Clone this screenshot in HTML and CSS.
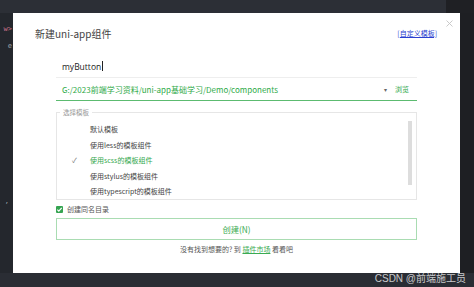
FILE: index.html
```html
<!DOCTYPE html>
<html lang="zh-CN">
<head>
    <meta charset="UTF-8">
    <title>新建uni-app组件</title>
    <link rel="stylesheet" href="styles.css">
</head>
<body>
    <div class="screen">
        <div class="topbar">
            <div class="topbar-main"></div>
            <div class="topbar-side"></div>
        </div>
        <div class="middle">
            <div class="gutter">
                <div class="code code-red">w&gt;</div>
                <div class="code code-gray">e</div>
                <div class="code code-dot">,</div>
            </div>
            <div class="dialog">
                <svg class="close" width="7" height="7" viewBox="0 0 7 7"><path d="M0.5 0.5 L6.5 6.5 M6.5 0.5 L0.5 6.5" stroke="#c4c4c4" stroke-width="0.9"/></svg>
                <div class="header">
                    <span class="title">新建uni-app组件</span>
                    <a class="custom-link">[自定义模板]</a>
                </div>
                <div class="form">
                    <div class="name-row">myButton<span class="caret"></span></div>
                    <div class="path-row">
                        <span class="path">G:/2023前端学习资料/uni-app基础学习/Demo/components</span>
                        <span class="arrow">&#9662;</span>
                        <span class="browse">浏览</span>
                    </div>
                    <fieldset class="templates">
                        <legend>选择模板</legend>
                        <div class="template-body">
                            <ul class="template-list">
                                <li>默认模板</li>
                                <li>使用less的模板组件</li>
                                <li class="active">使用scss的模板组件</li>
                                <li>使用stylus的模板组件</li>
                                <li>使用typescript的模板组件</li>
                            </ul>
                            <div class="scrollbar"></div>
                        </div>
                    </fieldset>
                    <label class="check-row">
                        <span class="checkbox">
                            <svg width="7" height="7" viewBox="0 0 8 8"><path d="M1.5 4.2 L3.2 5.8 L6.5 2.2" fill="none" stroke="#fff" stroke-width="1.4"/></svg>
                        </span>
                        创建同名目录
                    </label>
                    <button class="create">创建(N)</button>
                    <div class="footer">没有找到想要的? 到 <a class="market">插件市场</a> 看看吧</div>
                </div>
            </div>
            <div class="right-edge"></div>
        </div>
        <div class="bottombar"></div>
        <div class="watermark">CSDN @前端施工员</div>
    </div>
</body>
</html>
```

FILE: styles.css
```css
body {
    margin: 0;
    background-color: #25282e;
    font-family: "Noto Sans CJK SC", "Open Sans", sans-serif;
}
.screen {
    position: relative;
    width: 474px;
    height: 287px;
    overflow: hidden;
    background-color: #25282e;
}
.topbar {
    display: flex;
    height: 13px;
}
.topbar-main {
    flex: 1;
    background-color: #2c2f36;
}
.topbar-side {
    width: 28px;
    background-color: #1f2024;
}
.middle {
    display: flex;
    height: 260px;
}
.gutter {
    width: 13px;
    overflow: hidden;
    background-color: #24272d;
    position: relative;
}
.code {
    position: absolute;
    right: 1px;
    font-size: 7px;
    white-space: nowrap;
    font-family: "DejaVu Sans Mono", monospace;
}
.code-red {
    top: 12px;
    color: #c9718a;
}
.code-gray {
    top: 29px;
    color: #9aa0a8;
}
.code-dot {
    top: 184px;
    right: 4px;
    color: #9aa0a8;
}
.dialog {
    position: relative;
    width: 447px;
    background-color: #ffffff;
}
.right-edge {
    flex: 1;
    background-color: #1e1f23;
}
.close {
    position: absolute;
    top: 7px;
    right: 7px;
}
.header {
    display: flex;
    align-items: center;
    justify-content: space-between;
    height: 40px;
    padding: 0 23px 0 22px;
}
.title {
    font-size: 10px;
    color: #444;
}
.custom-link {
    font-size: 7px;
    color: #2b3fd0;
    text-decoration: underline;
    margin-top: -1px;
}
.form {
    padding: 0 43px;
}
.name-row {
    display: flex;
    align-items: center;
    height: 22px;
    margin-top: 2px;
    padding-left: 6px;
    border-bottom: 1px solid #eeeeee;
    font-family: "Open Sans", sans-serif;
    font-size: 8.5px;
    color: #222;
}
.caret {
    display: inline-block;
    width: 1px;
    height: 10px;
    background-color: #222;
    margin-left: 1px;
}
.path-row {
    display: flex;
    align-items: center;
    height: 22px;
    padding: 0 8px 0 6px;
    border-bottom: 1px solid #5cbb70;
    font-size: 8px;
    color: #2eaa48;
}
.path {
    flex: 1;
}
.arrow {
    font-size: 6px;
    color: #666;
    margin-right: 8px;
}
.browse {
    font-size: 7px;
    color: #30a84b;
}
.templates {
    margin: 6px 0 0;
    padding: 0;
    height: 93px;
    box-sizing: border-box;
    border: 1px solid #e6e6e6;
}
.templates legend {
    margin-left: 3px;
    padding: 0 3px;
    font-size: 6.5px;
    color: #999;
}
.template-body {
    display: flex;
    height: 83px;
}
.template-list {
    flex: 1;
    list-style: none;
    margin: 5px 0 0;
    padding: 0 0 0 33px;
}
.template-list li {
    position: relative;
    height: 15.5px;
    line-height: 15.5px;
    font-size: 7px;
    color: #444;
}
.template-list li.active {
    color: #34a84e;
}
.template-list li.active::before {
    content: "\2713";
    position: absolute;
    left: -18px;
    color: #777;
    font-size: 7px;
}
.scrollbar {
    width: 4px;
    height: 64px;
    margin: 4px 4px 0 0;
    background-color: #dddddd;
}
.check-row {
    display: flex;
    align-items: center;
    gap: 4px;
    height: 18px;
    font-size: 7px;
    color: #555;
}
.checkbox {
    display: flex;
    align-items: center;
    justify-content: center;
    width: 7px;
    height: 7px;
    background-color: #35a451;
    border-radius: 1px;
}
.create {
    display: block;
    width: 100%;
    height: 22px;
    background: #ffffff;
    border: 1px solid #a9dcb2;
    font-family: "Noto Sans CJK SC", sans-serif;
    font-size: 8.3px;
    color: #3aab52;
}
.footer {
    margin-top: 4px;
    text-align: center;
    font-size: 7px;
    color: #555;
}
.market {
    color: #3aab52;
    text-decoration: underline;
}
.bottombar {
    height: 14px;
    background-color: #2a2d34;
}
.watermark {
    position: absolute;
    right: 8px;
    bottom: 2px;
    font-family: "Liberation Sans", "Noto Sans CJK SC", sans-serif;
    font-size: 10px;
    color: rgba(255, 255, 255, 0.75);
}
```
